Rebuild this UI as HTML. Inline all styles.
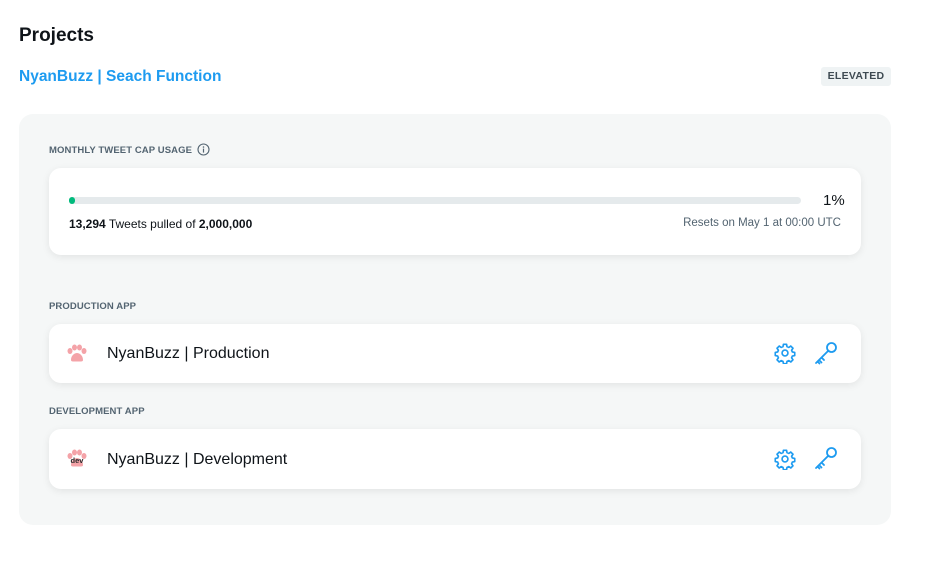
<!DOCTYPE html>
<html><head><meta charset="utf-8"><style>
*{box-sizing:border-box;margin:0;padding:0}
body{width:931px;height:561px;background:#fff;font-family:"Liberation Sans",sans-serif;color:#0f1419;position:relative;overflow:hidden}
.abs{position:absolute}
h1{position:absolute;left:19px;top:25px;font-size:19px;font-weight:700}
.link{left:19px;top:68px;font-size:15.5px;font-weight:700;color:#1d9bf0}
.badge{left:821px;top:67px;width:70px;height:19px;background:#eff3f4;border-radius:3px;font-size:10.5px;font-weight:700;color:#3e4a52;text-align:center;line-height:19px;letter-spacing:.3px}
.panel{left:19px;top:114px;width:872px;height:411px;background:#f5f7f7;border-radius:14px}
.lbl{font-size:9.5px;font-weight:700;color:#536471;left:49px;letter-spacing:.1px}
.card{left:49px;width:812px;background:#fff;border-radius:12px;box-shadow:0 2px 8px rgba(0,0,0,.08)}
.bar{left:20px;top:29px;width:732px;height:7px;background:#e5eaec;border-radius:4px}
.fill{width:6px;height:7px;background:#00ba7c;border-radius:4px}
.name{left:58px;font-size:16px;color:#0f1419}
</style></head><body>
<h1>Projects</h1>
<div class="abs link">NyanBuzz | Seach Function</div>
<div class="abs badge">ELEVATED</div>
<div class="abs panel"></div>
<div class="abs lbl" style="top:143px">MONTHLY TWEET CAP USAGE
<svg width="13" height="13" viewBox="0 0 13 13" style="vertical-align:-3px;margin-left:2px"><circle cx="6.5" cy="6.5" r="5.5" fill="none" stroke="#536471" stroke-width="1.1"/><circle cx="6.5" cy="4" r=".8" fill="#536471"/><rect x="5.9" y="5.6" width="1.2" height="4" fill="#536471"/></svg></div>
<div class="abs card" style="top:168px;height:87px">
 <div class="abs bar"><div class="fill"></div></div>
 <div class="abs" style="left:774px;top:24px;font-size:15px">1%</div>
 <div class="abs" style="left:20px;top:49px;font-size:12px"><b>13,294</b> Tweets pulled of <b>2,000,000</b></div>
 <div class="abs" style="right:20px;top:49px;font-size:11.5px;color:#536471">Resets on May 1 at 00:00 UTC</div>
</div>
<div class="abs lbl" style="top:301px">PRODUCTION APP</div>
<div class="abs card" style="top:324px;height:59px">
 <svg class="abs" style="left:17px;top:20px" width="22" height="19" viewBox="0 0 22 19"><g fill="#f4a3a8"><ellipse cx="4" cy="7" rx="2.5" ry="3"/><ellipse cx="8.5" cy="3.5" rx="2.5" ry="3"/><ellipse cx="13.5" cy="3.5" rx="2.5" ry="3"/><ellipse cx="18" cy="7" rx="2.5" ry="3"/><path d="M5 16c0-5 4-7 6-7s6 2 6 7c0 2-3 1.5-6 1.5S5 18 5 16z"/></g></svg>
 <div class="abs name" style="top:21px">NyanBuzz | Production</div>
 <svg class="abs" style="left:725px;top:18px" width="22" height="22" viewBox="0 0 24 24" fill="none" stroke="#1d9bf0" stroke-width="1.8"><circle cx="12" cy="12" r="3.2"/><path d="M10.3 2.5h3.4l.5 2.6 1.9.8 2.2-1.5 2.4 2.4-1.5 2.2.8 1.9 2.6.5v3.4l-2.6.5-.8 1.9 1.5 2.2-2.4 2.4-2.2-1.5-1.9.8-.5 2.6h-3.4l-.5-2.6-1.9-.8-2.2 1.5-2.4-2.4 1.5-2.2-.8-1.9-2.6-.5v-3.4l2.6-.5.8-1.9-1.5-2.2 2.4-2.4 2.2 1.5 1.9-.8z" stroke-linejoin="round"/></svg>
 <svg class="abs" style="left:764px;top:16px" width="26" height="26" viewBox="0 0 26 26" fill="none" stroke="#1d9bf0" stroke-width="1.8"><circle cx="18.5" cy="7.5" r="4.5"/><path d="M15.3 10.7L3 23M6 20l2.5 2.5M8.5 17.5l2.5 2.5M4.5 21.5l2 2" stroke-linecap="round"/></svg>
</div>
<div class="abs lbl" style="top:406px">DEVELOPMENT APP</div>
<div class="abs card" style="top:429px;height:60px">
 <svg class="abs" style="left:17px;top:20px" width="22" height="19" viewBox="0 0 22 19"><g fill="#f4a3a8"><ellipse cx="4" cy="7" rx="2.5" ry="3"/><ellipse cx="8.5" cy="3.5" rx="2.5" ry="3"/><ellipse cx="13.5" cy="3.5" rx="2.5" ry="3"/><ellipse cx="18" cy="7" rx="2.5" ry="3"/><path d="M5 16c0-5 4-7 6-7s6 2 6 7c0 2-3 1.5-6 1.5S5 18 5 16z"/></g><text x="11" y="14" text-anchor="middle" font-family="Liberation Sans" font-weight="700" font-size="7.5" fill="#2b2b2b">dev</text></svg>
 <div class="abs name" style="top:22px">NyanBuzz | Development</div>
 <svg class="abs" style="left:725px;top:19px" width="22" height="22" viewBox="0 0 24 24" fill="none" stroke="#1d9bf0" stroke-width="1.8"><circle cx="12" cy="12" r="3.2"/><path d="M10.3 2.5h3.4l.5 2.6 1.9.8 2.2-1.5 2.4 2.4-1.5 2.2.8 1.9 2.6.5v3.4l-2.6.5-.8 1.9 1.5 2.2-2.4 2.4-2.2-1.5-1.9.8-.5 2.6h-3.4l-.5-2.6-1.9-.8-2.2 1.5-2.4-2.4 1.5-2.2-.8-1.9-2.6-.5v-3.4l2.6-.5.8-1.9-1.5-2.2 2.4-2.4 2.2 1.5 1.9-.8z" stroke-linejoin="round"/></svg>
 <svg class="abs" style="left:764px;top:16px" width="26" height="26" viewBox="0 0 26 26" fill="none" stroke="#1d9bf0" stroke-width="1.8"><circle cx="18.5" cy="7.5" r="4.5"/><path d="M15.3 10.7L3 23M6 20l2.5 2.5M8.5 17.5l2.5 2.5M4.5 21.5l2 2" stroke-linecap="round"/></svg>
</div>
</body></html>
